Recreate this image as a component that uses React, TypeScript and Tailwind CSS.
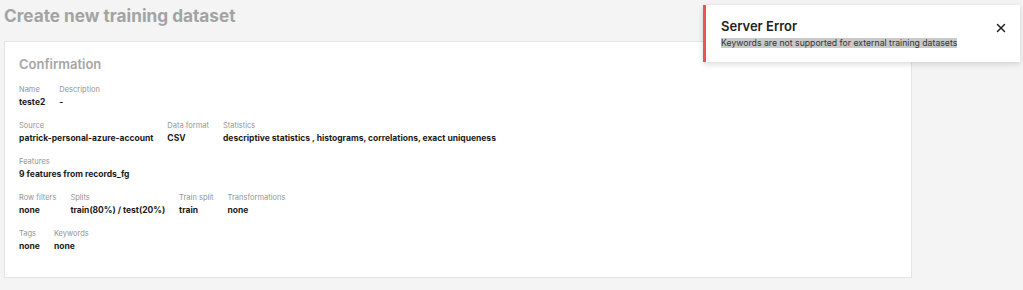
import React from 'react';
import { X } from 'lucide-react';

type Field = { label: string; value: string };

const rows: Field[][] = [
  [
    { label: 'Name', value: 'teste2' },
    { label: 'Description', value: '-' },
  ],
  [
    { label: 'Source', value: 'patrick-personal-azure-account' },
    { label: 'Data format', value: 'CSV' },
    { label: 'Statistics', value: 'descriptive statistics , histograms, correlations, exact uniqueness' },
  ],
  [{ label: 'Features', value: '9 features from records_fg' }],
  [
    { label: 'Row filters', value: 'none' },
    { label: 'Splits', value: 'train(80%) / test(20%)' },
    { label: 'Train split', value: 'train' },
    { label: 'Transformations', value: 'none' },
  ],
  [
    { label: 'Tags', value: 'none' },
    { label: 'Keywords', value: 'none' },
  ],
];

const Toast = () => (
  <div className="absolute top-[5px] right-[3px] w-[317px] h-[57px] bg-white border-l-[3px] border-[#ef5350] shadow-[0_2px_6px_rgba(0,0,0,0.15)] flex items-start justify-between pl-[15px] pr-[12px] pt-[12px]">
    <div>
      <div className="text-[13px] font-semibold text-[#1f1f1f] leading-[18px]">Server Error</div>
      <div className="mt-[3px] text-[8.7px] leading-[11px] text-[#333]">
        <span className="bg-[#c9c9c9]">Keywords are not supported for external training datasets</span>
      </div>
    </div>
    <X className="w-[14px] h-[14px] mt-[4px] text-[#222]" strokeWidth={2.5} />
  </div>
);

export default function App() {
  return (
    <div className="relative min-h-[290px] bg-[#f4f4f4] px-[4px] font-['Inter',sans-serif] overflow-hidden">
      <h1 className="pt-[5px] text-[17.2px] leading-[22px] font-bold text-[#a3a3a3]">Create new training dataset</h1>
      <div className="mt-[14px] w-[908px] h-[237px] bg-white border border-[#e4e4e4] pt-[13px] px-[14px]">
        <h2 className="text-[13px] leading-[18px] font-semibold text-[#a6a6a6]">Confirmation</h2>
        <div className="mt-[12px] flex flex-col gap-[12px]">
          {rows.map((row, i) => (
            <div key={i} className="flex gap-[14px]">
              {row.map((f) => (
                <div key={f.label} className="flex flex-col">
                  <span className="text-[7.5px] leading-[10px] text-[#949494]">{f.label}</span>
                  <span className="mt-[1px] mb-[1px] text-[8.5px] leading-[12px] font-bold text-[#1a1a1a]">{f.value}</span>
                </div>
              ))}
            </div>
          ))}
        </div>
      </div>
      <Toast />
    </div>
  );
}
